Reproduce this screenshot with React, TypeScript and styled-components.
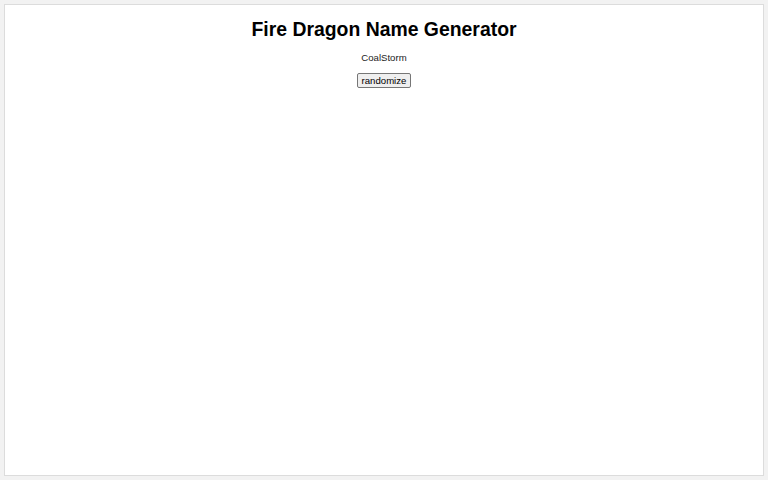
import React, { useState } from "react";
import styled, { createGlobalStyle } from "styled-components";

const GlobalStyle = createGlobalStyle`
  html, body { margin: 0; padding: 0; }
  body {
    background: #f2f2f2;
    font-family: "Liberation Sans", Arial, sans-serif;
    padding: 4px 4px;
  }
`;

const Panel = styled.div`
  box-sizing: border-box;
  height: 472px;
  background: #ffffff;
  border: 1px solid #dcdcdc;
  display: flex;
  flex-direction: column;
  align-items: center;
  padding-top: 13px;
`;

const Title = styled.h1`
  margin: 0;
  font-size: 19.4px;
  line-height: 22px;
  font-weight: bold;
  color: #000;
`;

const Name = styled.p`
  margin: 12px 0 0;
  font-size: 9.6px;
  line-height: 12px;
  color: #222;
`;

const Button = styled.button`
  margin-top: 9px;
  font-family: "Liberation Sans", Arial, sans-serif;
  font-size: 9.6px;
  line-height: 11px;
  padding: 1px 4px;
  background: #efefef;
  border: 1px solid #767676;
  border-radius: 2px;
  color: #000;
`;

const names = ["CoalStorm", "Emberwing", "Ashfang", "Cinderclaw", "Blazeheart", "Pyrescale"];

export default function App() {
  const [name, setName] = useState("CoalStorm");
  return (
    <>
      <GlobalStyle />
      <Panel>
        <Title>Fire Dragon Name Generator</Title>
        <Name>{name}</Name>
        <Button onClick={() => setName(names[Math.floor(Math.random() * names.length)])}>
          randomize
        </Button>
      </Panel>
    </>
  );
}
